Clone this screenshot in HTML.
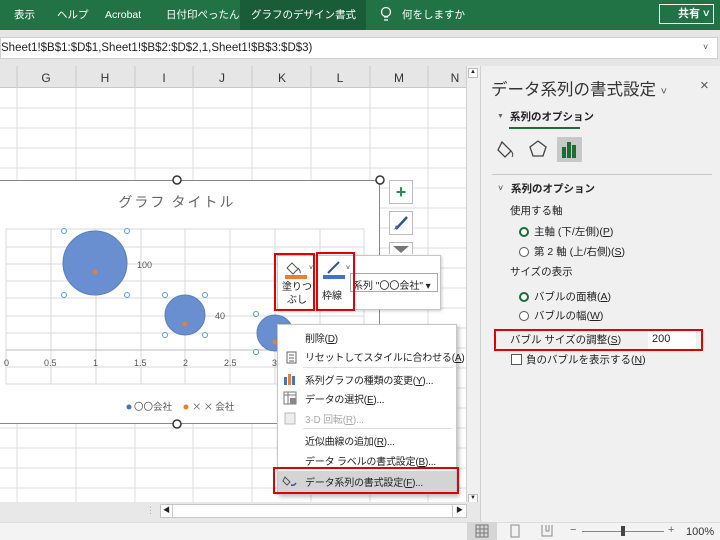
<!DOCTYPE html>
<html><head><meta charset="utf-8"><style>
*{margin:0;padding:0;box-sizing:border-box}
body{width:720px;height:540px;overflow:hidden;position:relative;background:#fff;font-family:"Liberation Sans","Noto Sans CJK JP",sans-serif;font-size:11px;color:#222}
.a{position:absolute}
.rb{border:2.5px solid #e00000}
.rib{position:absolute;top:0;height:30px;line-height:30px;color:#fff;font-size:10.5px;white-space:nowrap}
.menu div{position:absolute;left:27px;font-size:10px;color:#222;white-space:nowrap;letter-spacing:-0.2px}
.pn{font-size:10.5px;color:#222;position:absolute;white-space:nowrap}
.rad{position:absolute;width:10px;height:10px;border-radius:50%;border:1px solid #555;background:#fff}
.rad.on{border:2.5px solid #1d6b35}
</style></head><body>
<div class="a" style="left:0;top:0;width:720px;height:30px;background:#217346"></div>
<div class="a" style="left:240px;top:0;width:126px;height:30px;background:#1a5c38"></div>
<div class="rib" style="left:14px">表示</div>
<div class="rib" style="left:57px">ヘルプ</div>
<div class="rib" style="left:105px">Acrobat</div>
<div class="rib" style="left:166px">日付印ぺったん</div>
<div class="rib" style="left:251px">グラフのデザイン</div>
<div class="rib" style="left:335px">書式</div>
<svg class="a" style="left:380px;top:6px" width="12" height="18"><circle cx="6" cy="6" r="4.5" fill="none" stroke="#fff" stroke-width="1.3"/><path d="M4 11h4M4 14h4" stroke="#fff" stroke-width="1.3"/></svg>
<div class="rib" style="left:402px">何をしますか</div>
<div class="a" style="left:659px;top:4px;width:55px;height:20px;border:1px solid #fff;color:#fff;font-size:11px;font-weight:bold;line-height:18px;padding-left:18px;white-space:nowrap">共有 ˅</div>
<div class="a" style="left:0;top:30px;width:720px;height:36px;background:#e6e6e6"></div>
<div class="a" style="left:0;top:37px;width:718px;height:22px;background:#fff;border:1px solid #d0d0d0;font-size:11.5px;line-height:20px;color:#222;white-space:nowrap">Sheet1!$B$1:$D$1,Sheet1!$B$2:$D$2,1,Sheet1!$B$3:$D$3)</div>
<div class="a" style="left:703px;top:42px;font-size:9px;color:#555">˅</div>
<div class="a" style="left:0;top:66px;width:466px;height:22px;background:#e6e6e6;border-bottom:1px solid #c8c8c8"></div>
<svg class="a" style="left:0;top:66px" width="466" height="436">
<g stroke="#dcdcdc" stroke-width="1">
<path d="M17 0V436M76 0V436M135 0V436M193 0V436M252 0V436M311 0V436M370 0V436M428 0V436"/>
<path d="M0 42H466M0 62H466M0 82H466M0 102H466M0 122H466M0 142H466M0 162H466M0 182H466M0 202H466M0 222H466M0 242H466M0 262H466M0 282H466M0 302H466M0 322H466M0 342H466M0 362H466M0 382H466M0 402H466M0 422H466"/>
</g>
<g stroke="#c8c8c8"><path d="M17 0V22M76 0V22M135 0V22M193 0V22M252 0V22M311 0V22M370 0V22M428 0V22"/></g>
<g font-size="12" fill="#333" text-anchor="middle" font-family="Liberation Sans"><text x="46" y="16">G</text><text x="105" y="16">H</text><text x="164" y="16">I</text><text x="222" y="16">J</text><text x="282" y="16">K</text><text x="340" y="16">L</text><text x="399" y="16">M</text><text x="455" y="16">N</text></g>
</svg>
<div class="a" style="left:466px;top:66px;width:14px;height:452px;background:#f0f0f0;border-left:1px solid #d0d0d0"></div>
<div class="a" style="left:468px;top:68px;width:10px;height:10px;background:#fff;border:1px solid #bbb;font-size:6px;text-align:center">▲</div>
<div class="a" style="left:468px;top:494px;width:10px;height:10px;background:#fff;border:1px solid #bbb;font-size:6px;text-align:center">▼</div>
<div class="a" style="left:-2px;top:180px;width:382px;height:244px;background:#fff;border:1px solid #888"></div>
<svg class="a" style="left:0;top:170px" width="480" height="270">
<g stroke="#d9d9d9"><path d="M6 59H364M6 77H364M6 94H364M6 111H364M6 128H364M6 146H364M6 163H364M6 180H364M6 197H364M6 214H364"/><path d="M6 59V214M51 59V214M96 59V214M141 59V214M185 59V214M230 59V214M275 59V214M320 59V214M364 59V214"/></g>
<path d="M6 180H364" stroke="#bbb"/>
<circle cx="95" cy="93" r="32" fill="#6a8fd0" stroke="#5a7fc0"/>
<circle cx="185" cy="145" r="20" fill="#6a8fd0" stroke="#5a7fc0"/>
<circle cx="275" cy="163" r="18" fill="#6a8fd0" stroke="#5a7fc0"/>
<g fill="#e0803a"><circle cx="95" cy="102" r="2.5"/><circle cx="185" cy="154" r="2.5"/><circle cx="275" cy="172" r="2.5"/></g>
<g fill="#fff" stroke="#5b9bd5"><circle cx="64" cy="61" r="2.5"/><circle cx="127" cy="61" r="2.5"/><circle cx="64" cy="125" r="2.5"/><circle cx="127" cy="125" r="2.5"/><circle cx="165" cy="125" r="2.5"/><circle cx="205" cy="125" r="2.5"/><circle cx="165" cy="165" r="2.5"/><circle cx="205" cy="165" r="2.5"/><circle cx="256" cy="144" r="2.5"/><circle cx="256" cy="182" r="2.5"/></g>
<g font-size="9" fill="#555" font-family="Liberation Sans"><text x="137" y="98">100</text><text x="215" y="149">40</text>
<text x="4" y="196">0</text><text x="44" y="196">0.5</text><text x="93" y="196">1</text><text x="134" y="196">1.5</text><text x="183" y="196">2</text><text x="224" y="196">2.5</text><text x="272" y="196">3</text></g>
<text x="177" y="37" font-size="14" fill="#666" text-anchor="middle" font-family="Noto Sans CJK JP" letter-spacing="2">グラフ タイトル</text>
<circle cx="129" cy="237" r="2.5" fill="#4472c4"/><text x="134" y="240" font-size="9.5" fill="#555" font-family="Noto Sans CJK JP">〇〇会社</text>
<circle cx="186" cy="237" r="2.5" fill="#ed7d31"/><text x="192" y="240" font-size="9.5" fill="#555" font-family="Noto Sans CJK JP">× × 会社</text>
<g fill="#fff" stroke="#333" stroke-width="1.5"><circle cx="177" cy="10" r="4"/><circle cx="380" cy="10" r="4"/><circle cx="177" cy="254" r="4"/></g>
</svg>
<div class="a" style="left:389px;top:180px;width:24px;height:24px;background:#fff;border:1px solid #bbb;color:#2e8b57;font-size:18px;font-weight:bold;text-align:center;line-height:22px">+</div>
<div class="a" style="left:389px;top:211px;width:24px;height:24px;background:#fff;border:1px solid #bbb"><svg width="22" height="22"><path d="M6 17L17 5" stroke="#2f5597" stroke-width="2.5"/><path d="M4 18l4-3-2-2z" fill="#4472c4"/></svg></div>
<div class="a" style="left:389px;top:242px;width:24px;height:12px;background:#fff;border:1px solid #bbb;border-bottom:none"><svg width="22" height="10"><path d="M3 3h16l-8 7z" fill="#777"/></svg></div>
<div class="a" style="left:277px;top:255px;width:164px;height:55px;background:#fff;border:1px solid #c6c6c6;box-shadow:1px 1px 3px rgba(0,0,0,.2)"></div>
<svg class="a" style="left:284px;top:260px" width="30" height="20"><path d="M8 3l6 6-5 5-6-6z" fill="none" stroke="#555"/><path d="M14 8q3 3 2 5" stroke="#2f5597" fill="none"/><rect x="1" y="15" width="22" height="4" fill="#ed7d31"/><text x="25" y="10" font-size="7" fill="#333">˅</text></svg>
<div class="a" style="left:280px;top:281px;font-size:10px;line-height:13px;text-align:center;width:34px;white-space:nowrap">塗りつ<br>ぶし</div>
<svg class="a" style="left:322px;top:260px" width="30" height="20"><path d="M6 13L17 2" stroke="#2f5597" stroke-width="2"/><rect x="1" y="15" width="22" height="4" fill="#4472c4"/><text x="24" y="10" font-size="7" fill="#333">˅</text></svg>
<div class="a" style="left:322px;top:287px;font-size:10px">枠線</div>
<div class="a" style="left:350px;top:273px;width:88px;height:19px;border:1px solid #aaa;font-size:10px;padding:3px 0 0 2px;background:#fff;white-space:nowrap">系列 "〇〇会社" ▾</div>
<div class="a rb" style="left:274px;top:253px;width:41px;height:58px"></div>
<div class="a rb" style="left:316px;top:252px;width:39px;height:59px"></div>
<div class="a menu" style="left:277px;top:324px;width:180px;height:171px;background:#fff;border:1px solid #c6c6c6;box-shadow:2px 2px 4px rgba(0,0,0,.25)">
<div style="top:5px">削除(<u>D</u>)</div>
<div style="top:24px">リセットしてスタイルに合わせる(<u>A</u>)</div>
<div style="top:47px">系列グラフの種類の変更(<u>Y</u>)...</div>
<div style="top:66px">データの選択(<u>E</u>)...</div>
<div style="top:86px;color:#aaa">3-D 回転(<u>R</u>)...</div>
<div style="top:108px">近似曲線の追加(<u>R</u>)...</div>
<div style="top:128px">データ ラベルの書式設定(<u>B</u>)...</div>
<span class="a" style="left:0;top:146px;width:178px;height:22px;background:#d4d4d4"></span>
<div style="top:149px">データ系列の書式設定(<u>F</u>)...</div>
<span class="a" style="left:25px;top:42px;width:150px;height:1px;background:#e0e0e0"></span>
<span class="a" style="left:25px;top:103px;width:150px;height:1px;background:#e0e0e0"></span>
<svg class="a" style="left:4px;top:46px" width="16" height="16"><rect x="2" y="6" width="3" height="8" fill="#4472c4"/><rect x="6" y="3" width="3" height="11" fill="#ed7d31"/><rect x="10" y="5" width="3" height="9" fill="#4472c4"/></svg>
<svg class="a" style="left:4px;top:24px" width="16" height="16"><rect x="5" y="3" width="9" height="11" fill="none" stroke="#666"/><path d="M7 6h5M7 9h5M7 12h5" stroke="#666"/></svg>
<svg class="a" style="left:4px;top:65px" width="16" height="16"><rect x="2" y="2" width="12" height="12" fill="none" stroke="#777"/><path d="M2 5h12M6 2v12" stroke="#777"/><rect x="8" y="8" width="6" height="6" fill="#888"/></svg>
<svg class="a" style="left:4px;top:85px" width="16" height="16"><rect x="3" y="3" width="10" height="11" fill="#eee" stroke="#bbb"/></svg>
<svg class="a" style="left:4px;top:148px" width="16" height="16"><path d="M3 4l5 5-3 3-4-4z" fill="none" stroke="#555"/><path d="M9 12q3 1 5-2" stroke="#2f5597" fill="none" stroke-width="1.5"/></svg>
</div>
<div class="a rb" style="left:273px;top:467px;width:186px;height:27px"></div>
<div class="a" style="left:0;top:502px;width:480px;height:20px;background:#e8e8e8"></div>
<div class="a" style="left:160px;top:504px;width:307px;height:14px;background:#fff;border:1px solid #c6c6c6"></div>
<div class="a" style="left:161px;top:505px;width:12px;height:12px;border-right:1px solid #ccc;font-size:7px;text-align:center">◀</div>
<div class="a" style="left:452px;top:505px;width:14px;height:12px;border-left:1px solid #ccc;font-size:7px;text-align:center">▶</div>
<div class="a" style="left:146px;top:505px;color:#aaa;font-size:9px">⋮</div>
<div class="a" style="left:0;top:522px;width:720px;height:18px;background:#f3f3f3;border-top:1px solid #ddd"></div>
<div class="a" style="left:467px;top:522px;width:30px;height:18px;background:#d6d6d6"></div>
<svg class="a" style="left:475px;top:524px" width="14" height="14"><path d="M1 1h12v12H1zM1 5h12M1 9h12M5 1v12M9 1v12" fill="none" stroke="#777"/></svg>
<svg class="a" style="left:508px;top:524px" width="14" height="14"><rect x="3" y="1" width="8" height="12" fill="none" stroke="#888"/></svg>
<svg class="a" style="left:540px;top:524px" width="14" height="14"><path d="M2 1v11h10V1M6 1v6h3V1" fill="none" stroke="#888"/></svg>
<div class="a" style="left:570px;top:524px;color:#666;font-size:11px">−</div>
<div class="a" style="left:582px;top:531px;width:82px;height:1px;background:#888"></div>
<div class="a" style="left:621px;top:526px;width:4px;height:10px;background:#444"></div>
<div class="a" style="left:668px;top:524px;color:#666;font-size:11px">+</div>
<div class="a" style="left:686px;top:526px;color:#333;font-size:11px">100%</div>
<div class="a" style="left:480px;top:66px;width:240px;height:456px;background:#f0f0f0;border-left:1px solid #d0d0d0"></div>
<div class="a" style="left:491px;top:76px;font-size:16.5px;color:#333;white-space:nowrap">データ系列の書式設定 <span style="font-size:11px;color:#555">˅</span></div>
<div class="a" style="left:700px;top:77px;font-size:15px;color:#555">×</div>
<div class="a" style="left:497px;top:113px;font-size:7px;color:#666">▼</div>
<div class="a" style="left:510px;top:109px;font-size:10.5px;font-weight:bold;color:#222">系列のオプション</div>
<div class="a" style="left:509px;top:127px;width:71px;height:2px;background:#1d6b35"></div>
<svg class="a" style="left:496px;top:140px" width="22" height="20"><path d="M6 2l9 9-6 6-7-7z" fill="none" stroke="#444" stroke-width="1.3"/><path d="M15 11q3 3 1 6" stroke="#444" fill="none"/></svg>
<svg class="a" style="left:528px;top:139px" width="20" height="20"><path d="M10 2l8 6-3 9H5L2 8z" fill="none" stroke="#444" stroke-width="1.3"/></svg>
<div class="a" style="left:557px;top:137px;width:25px;height:25px;background:#c8c8c8"></div>
<svg class="a" style="left:560px;top:140px" width="20" height="20"><rect x="2" y="7" width="4" height="11" fill="#1d6b35"/><rect x="7" y="2" width="4" height="16" fill="#1d6b35"/><rect x="12" y="5" width="4" height="13" fill="#1d6b35"/></svg>
<div class="a" style="left:492px;top:174px;width:220px;height:1px;background:#c8c8c8"></div>
<div class="a" style="left:498px;top:183px;font-size:9px;color:#444">˅</div>
<div class="a" style="left:511px;top:181px;font-size:10.5px;font-weight:bold">系列のオプション</div>
<div class="pn" style="left:510px;top:203px">使用する軸</div>
<div class="rad on" style="left:519px;top:227px"></div><div class="pn" style="left:534px;top:224px">主軸 (下/左側)(<u>P</u>)</div>
<div class="rad" style="left:519px;top:247px"></div><div class="pn" style="left:534px;top:244px">第 2 軸 (上/右側)(<u>S</u>)</div>
<div class="pn" style="left:510px;top:264px">サイズの表示</div>
<div class="rad on" style="left:519px;top:292px"></div><div class="pn" style="left:534px;top:289px">バブルの面積(<u>A</u>)</div>
<div class="rad" style="left:519px;top:311px"></div><div class="pn" style="left:534px;top:308px">バブルの幅(<u>W</u>)</div>
<div class="pn" style="left:510px;top:332px">バブル サイズの調整(<u>S</u>)</div>
<div class="a" style="left:648px;top:330px;width:48px;height:19px;background:#fff;font-size:11px;padding:3px 0 0 4px">200</div>
<div class="a rb" style="left:494px;top:329px;width:209px;height:22px"></div>
<div class="a" style="left:511px;top:354px;width:11px;height:11px;border:1px solid #555;background:#fff"></div>
<div class="pn" style="left:526px;top:352px">負のバブルを表示する(<u>N</u>)</div>
</body></html>
